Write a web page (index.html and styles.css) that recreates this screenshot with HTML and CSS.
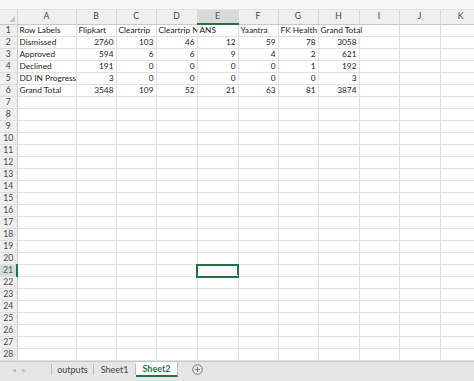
FILE: index.html
```html
<!DOCTYPE html>
<html>
<head>
<meta charset="utf-8">
<link rel="stylesheet" href="styles.css">
</head>
<body>
<div class="app">
  <div class="topband"></div>
  <div class="grid-wrap">
    <table class="sheet">
      <colgroup>
        <col class="w-hdr"><col class="w-a"><col class="w-40"><col class="w-40"><col class="w-41"><col class="w-41"><col class="w-40"><col class="w-40"><col class="w-41"><col class="w-40"><col class="w-41"><col class="w-41">
      </colgroup>
      <thead>
        <tr><th class="corner"><span class="tri"></span></th><th>A</th><th>B</th><th>C</th><th>D</th><th class="hl">E</th><th>F</th><th>G</th><th>H</th><th>I</th><th>J</th><th>K</th></tr>
      </thead>
      <tbody>
        <tr><th>1</th><td>Row Labels</td><td>Flipkart</td><td>Cleartrip</td><td class="clip">Cleartrip N</td><td>ANS</td><td>Yaantra</td><td>FK Health</td><td class="spill">Grand Total</td><td></td><td></td><td></td></tr>
        <tr><th>2</th><td>Dismissed</td><td class="n">2760</td><td class="n">103</td><td class="n">46</td><td class="n">12</td><td class="n">59</td><td class="n">78</td><td class="n">3058</td><td></td><td></td><td></td></tr>
        <tr><th>3</th><td>Approved</td><td class="n">594</td><td class="n">6</td><td class="n">6</td><td class="n">9</td><td class="n">4</td><td class="n">2</td><td class="n">621</td><td></td><td></td><td></td></tr>
        <tr><th>4</th><td>Declined</td><td class="n">191</td><td class="n">0</td><td class="n">0</td><td class="n">0</td><td class="n">0</td><td class="n">1</td><td class="n">192</td><td></td><td></td><td></td></tr>
        <tr><th>5</th><td>DD IN Progress</td><td class="n">3</td><td class="n">0</td><td class="n">0</td><td class="n">0</td><td class="n">0</td><td class="n">0</td><td class="n">3</td><td></td><td></td><td></td></tr>
        <tr><th>6</th><td>Grand Total</td><td class="n">3548</td><td class="n">109</td><td class="n">52</td><td class="n">21</td><td class="n">63</td><td class="n">81</td><td class="n">3874</td><td></td><td></td><td></td></tr>
        <tr><th>7</th><td></td><td></td><td></td><td></td><td></td><td></td><td></td><td></td><td></td><td></td><td></td></tr>
        <tr><th>8</th><td></td><td></td><td></td><td></td><td></td><td></td><td></td><td></td><td></td><td></td><td></td></tr>
        <tr><th>9</th><td></td><td></td><td></td><td></td><td></td><td></td><td></td><td></td><td></td><td></td><td></td></tr>
        <tr><th>10</th><td></td><td></td><td></td><td></td><td></td><td></td><td></td><td></td><td></td><td></td><td></td></tr>
        <tr><th>11</th><td></td><td></td><td></td><td></td><td></td><td></td><td></td><td></td><td></td><td></td><td></td></tr>
        <tr><th>12</th><td></td><td></td><td></td><td></td><td></td><td></td><td></td><td></td><td></td><td></td><td></td></tr>
        <tr><th>13</th><td></td><td></td><td></td><td></td><td></td><td></td><td></td><td></td><td></td><td></td><td></td></tr>
        <tr><th>14</th><td></td><td></td><td></td><td></td><td></td><td></td><td></td><td></td><td></td><td></td><td></td></tr>
        <tr><th>15</th><td></td><td></td><td></td><td></td><td></td><td></td><td></td><td></td><td></td><td></td><td></td></tr>
        <tr><th>16</th><td></td><td></td><td></td><td></td><td></td><td></td><td></td><td></td><td></td><td></td><td></td></tr>
        <tr><th>17</th><td></td><td></td><td></td><td></td><td></td><td></td><td></td><td></td><td></td><td></td><td></td></tr>
        <tr><th>18</th><td></td><td></td><td></td><td></td><td></td><td></td><td></td><td></td><td></td><td></td><td></td></tr>
        <tr><th>19</th><td></td><td></td><td></td><td></td><td></td><td></td><td></td><td></td><td></td><td></td><td></td></tr>
        <tr><th>20</th><td></td><td></td><td></td><td></td><td></td><td></td><td></td><td></td><td></td><td></td><td></td></tr>
        <tr><th class="hl-row">21</th><td></td><td></td><td></td><td></td><td class="sel"><span class="handle"></span></td><td></td><td></td><td></td><td></td><td></td><td></td></tr>
        <tr><th>22</th><td></td><td></td><td></td><td></td><td></td><td></td><td></td><td></td><td></td><td></td><td></td></tr>
        <tr><th>23</th><td></td><td></td><td></td><td></td><td></td><td></td><td></td><td></td><td></td><td></td><td></td></tr>
        <tr><th>24</th><td></td><td></td><td></td><td></td><td></td><td></td><td></td><td></td><td></td><td></td><td></td></tr>
        <tr><th>25</th><td></td><td></td><td></td><td></td><td></td><td></td><td></td><td></td><td></td><td></td><td></td></tr>
        <tr><th>26</th><td></td><td></td><td></td><td></td><td></td><td></td><td></td><td></td><td></td><td></td><td></td></tr>
        <tr><th>27</th><td></td><td></td><td></td><td></td><td></td><td></td><td></td><td></td><td></td><td></td><td></td></tr>
        <tr><th>28</th><td></td><td></td><td></td><td></td><td></td><td></td><td></td><td></td><td></td><td></td><td></td></tr>
      </tbody>
    </table>
  </div>
  <div class="tabbar">
    <div class="nav"><span class="arrow">&#9664;</span><span class="arrow">&#9654;</span></div>
    <div class="tab">outputs</div>
    <div class="tab">Sheet1</div>
    <div class="tab active">Sheet2</div>
    <div class="add">
      <svg width="11" height="11" viewBox="0 0 11 11"><circle cx="5.5" cy="5.5" r="4.8" fill="none" stroke="#7a7a7a" stroke-width="1"/><path d="M5.5 3v5M3 5.5h5" stroke="#7a7a7a" stroke-width="1"/></svg>
    </div>
  </div>
</div>
</body>
</html>
```

FILE: styles.css
```css
* { box-sizing: border-box; }
html, body { margin: 0; padding: 0; background: #fff; }
body { font-family: Lato, "Liberation Sans", sans-serif; }
.app { width: 474px; height: 381px; overflow: hidden; display: flex; flex-direction: column; }
.topband { height: 10px; background: #f7f7f7; border-bottom: 1px solid #e2e2e2; flex: none; }
.grid-wrap { height: 351px; overflow: hidden; flex: none; }
.sheet { border-collapse: collapse; table-layout: fixed; width: 481px; font-size: 8.3px; color: #222; }
.w-hdr { width: 17px; }
.w-a { width: 59px; }
.w-40 { width: 40px; }
.w-41 { width: 41px; }
.sheet thead th { height: 14px; background: #efefef; color: #444; font-weight: normal; text-align: center; border-right: 1px solid #d6d6d6; border-bottom: 1px solid #c8c8c8; padding: 0; line-height: 13px; font-size: 8.6px; }
.sheet thead th.corner { position: relative; background: #efefef; }
.tri { position: absolute; right: 2px; bottom: 2px; width: 0; height: 0; border-left: 6px solid transparent; border-bottom: 6px solid #c3c3c3; }
.sheet thead th.hl { background: #d9d9d9; color: #217346; border-bottom: 2px solid #217346; }
.sheet tbody th { height: 12px; background: #efefef; color: #444; font-weight: normal; text-align: center; border-right: 1px solid #c8c8c8; border-bottom: 1px solid #dedede; padding: 0; line-height: 11px; font-size: 8.6px; }
.sheet tbody th.hl-row { background: #d9d9d9; color: #217346; border-right: 2px solid #217346; }
.sheet td { height: 12px; padding: 0 1px 0 2px; line-height: 11px; border-right: 1px solid #e1e1e1; border-bottom: 1px solid #e1e1e1; white-space: nowrap; overflow: hidden; }
.sheet td.n { text-align: right; padding-right: 2px; }
.sheet td.clip { text-overflow: clip; }
.sheet td.spill { overflow: visible; }
.sheet td.sel { position: relative; outline: 2px solid #217346; outline-offset: -1px; }
.handle { position: absolute; right: -3px; bottom: -3px; width: 4px; height: 4px; background: #217346; border: 1px solid #fff; }
.tabbar { flex: 1; display: flex; align-items: stretch; background: #e6e6e6; border-top: 1px solid #c6c6c6; height: 20px; padding-bottom: 4px; font-size: 9px; color: #444; }
.nav { width: 52px; display: flex; align-items: center; gap: 6px; padding-left: 12px; border-right: 1px solid #bdbdbd; margin: 2px 0; }
.arrow { font-size: 5px; color: #bbb; }
.tab { width: 42px; display: flex; align-items: center; justify-content: center; border-right: 1px solid #bdbdbd; margin: 2px 0; }
.tab.active { background: #fff; color: #217346; font-weight: bold; margin: 0; border-bottom: 2px solid #217346; border-right: 1px solid #bdbdbd; }
.add { display: flex; align-items: center; padding-left: 14px; }
```
